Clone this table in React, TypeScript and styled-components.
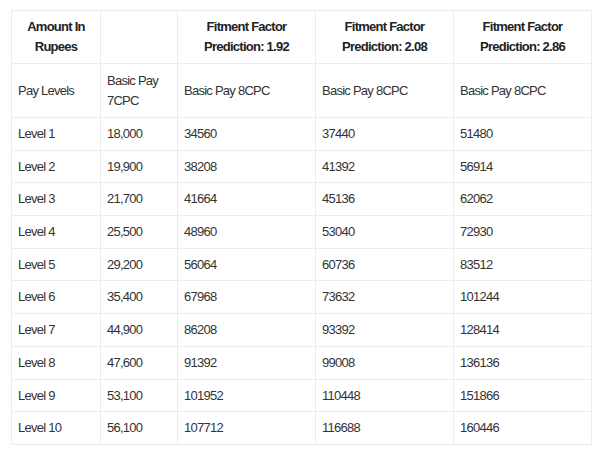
import React from "react";
import styled, { createGlobalStyle } from "styled-components";

const Global = createGlobalStyle`
  html, body { margin: 0; padding: 0; background: #ffffff; }
  body { font-family: "Liberation Sans", Arial, sans-serif; }
`;

const Wrap = styled.div`
  padding: 10px 9px 0 11px;
`;

const Table = styled.table`
  width: 580px;
  border-collapse: collapse;
  table-layout: fixed;
  font-family: "Liberation Sans", Arial, sans-serif;
  font-size: 13px;
  letter-spacing: -0.75px;
  line-height: 20px;
  color: #333333;
`;

const Th = styled.th`
  border: 1px solid #ececec;
  padding: 6px 6px;
  font-weight: bold;
  text-align: center;
  vertical-align: middle;
  color: #222222;
`;

const Td = styled.td<{ $tall?: boolean }>`
  border: 1px solid #ececec;
  padding: ${(p) => (p.$tall ? "6.5px 6px" : "6px 6px 5.7px")};
  text-align: left;
  vertical-align: middle;
`;

const rows: [string, string, string, string, string][] = [
  ["Level 1", "18,000", "34560", "37440", "51480"],
  ["Level 2", "19,900", "38208", "41392", "56914"],
  ["Level 3", "21,700", "41664", "45136", "62062"],
  ["Level 4", "25,500", "48960", "53040", "72930"],
  ["Level 5", "29,200", "56064", "60736", "83512"],
  ["Level 6", "35,400", "67968", "73632", "101244"],
  ["Level 7", "44,900", "86208", "93392", "128414"],
  ["Level 8", "47,600", "91392", "99008", "136136"],
  ["Level 9", "53,100", "101952", "110448", "151866"],
  ["Level 10", "56,100", "107712", "116688", "160446"],
];

export default function App() {
  return (
    <>
      <Global />
      <Wrap>
        <Table>
          <colgroup>
            <col style={{ width: 89 }} />
            <col style={{ width: 77 }} />
            <col style={{ width: 138 }} />
            <col style={{ width: 138 }} />
            <col style={{ width: 138 }} />
          </colgroup>
          <thead>
            <tr>
              <Th>
                Amount In
                <br />
                Rupees
              </Th>
              <Th></Th>
              <Th>
                Fitment Factor
                <br />
                Prediction: 1.92
              </Th>
              <Th>
                Fitment Factor
                <br />
                Prediction: 2.08
              </Th>
              <Th>
                Fitment Factor
                <br />
                Prediction: 2.86
              </Th>
            </tr>
          </thead>
          <tbody>
            <tr>
              <Td $tall>Pay Levels</Td>
              <Td $tall>
                Basic Pay
                <br />
                7CPC
              </Td>
              <Td $tall>Basic Pay 8CPC</Td>
              <Td $tall>Basic Pay 8CPC</Td>
              <Td $tall>Basic Pay 8CPC</Td>
            </tr>
            {rows.map((r) => (
              <tr key={r[0]}>
                {r.map((c, i) => (
                  <Td key={i}>{c}</Td>
                ))}
              </tr>
            ))}
          </tbody>
        </Table>
      </Wrap>
    </>
  );
}
